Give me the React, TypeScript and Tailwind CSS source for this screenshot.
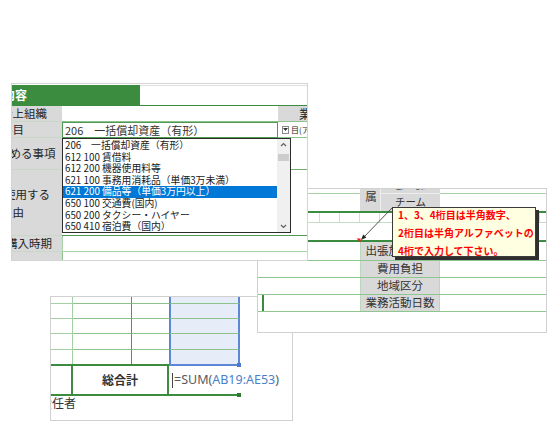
const ITEMS = [
  '206　一括償却資産（有形）',
  '612 100 賃借料',
  '612 200 機器使用料等',
  '621 100 事務用消耗品（単価3万未満）',
  '621 200 備品等（単価3万円以上）',
  '650 100 交通費(国内)',
  '650 200 タクシー・ハイヤー',
  '650 410 宿泊費（国内）',
];

function Chevron({ up }: { up?: boolean }) {
  return (
    <svg width="7" height="5" viewBox="0 0 7 5">
      <path d={up ? 'M1 4 L3.5 1.5 L6 4' : 'M1 1 L3.5 3.5 L6 1'} fill="none" stroke="#606060" strokeWidth="1.2" />
    </svg>
  );
}

function PanelA() {
  return (
    <div className="absolute left-[11px] top-[83px] w-[297px] h-[178px] bg-white border border-[#d4d4d4] overflow-hidden flex flex-col text-[#262626]">
      <div className="h-px shrink-0" />
      <div className="h-[20px] shrink-0 flex">
        <div className="w-[128px] bg-[#3c8c40] overflow-hidden flex items-center">
          <span className="ml-[-9px] text-[12px] font-bold text-white whitespace-nowrap leading-none">内容</span>
        </div>
        <div className="flex-1 border-t border-[#dedede]" />
      </div>
      <div className="h-px shrink-0 bg-[#3c8c40]" />

      <div className="h-[16px] shrink-0 flex">
        <div className="w-[50px] shrink-0 bg-[#d9d9d9] overflow-hidden flex items-center border-b border-[#c8d8c8]">
          <span className="ml-[-11px] text-[11.5px] leading-none whitespace-nowrap">計上組織</span>
        </div>
        <div className="w-[216px] shrink-0 border-b border-[#8cc28c]" />
        <div className="flex-1 bg-[#d9d9d9] overflow-hidden flex items-center border-b border-[#8cc28c]">
          <span className="ml-[21px] text-[12px] leading-none whitespace-nowrap">業務</span>
        </div>
      </div>

      <div className="h-[16px] shrink-0 flex">
        <div className="w-[50px] shrink-0 bg-[#d9d9d9] overflow-hidden flex items-center border-b border-[#c8d8c8]">
          <span className="ml-[-11px] text-[11.5px] leading-none whitespace-nowrap">科目</span>
        </div>
        <div className="w-[216px] shrink-0 border border-[#4e9a52] flex items-center pl-[2px] text-[11px] leading-none whitespace-nowrap text-[#333]">
          206　一括償却資産（有形）
        </div>
        <div className="flex-1 flex items-center pl-[4px] gap-[2px] overflow-hidden border-b border-[#8cc28c]">
          <div className="w-[7px] h-[8px] shrink-0 border border-[#8a8a8a] bg-white flex items-center justify-center">
            <svg width="5" height="3" viewBox="0 0 5 3">
              <path d="M0 0 H5 L2.5 3 Z" fill="#333" />
            </svg>
          </div>
          <span className="text-[8px] leading-none whitespace-nowrap">目(ア</span>
        </div>
      </div>

      <div className="h-[32px] shrink-0 flex">
        <div className="w-[50px] shrink-0 bg-[#d9d9d9] overflow-hidden flex items-center border-b border-[#c8d8c8]">
          <span className="ml-[-14px] text-[11.5px] leading-none whitespace-nowrap">求める事項</span>
        </div>
        <div className="flex-1 border-b border-[#6fae6f]" />
      </div>

      <div className="h-[66px] shrink-0 flex">
        <div className="w-[50px] shrink-0 bg-[#d9d9d9] overflow-hidden flex flex-col justify-center border-b border-[#c8d8c8] text-[11.5px] leading-[18px] whitespace-nowrap">
          <span className="ml-[-8px]">使用する</span>
          <span className="ml-[-11px]">理由</span>
        </div>
        <div className="flex-1 border-b border-[#4e9a52]" />
      </div>

      <div className="h-[16px] shrink-0 flex">
        <div className="w-[50px] shrink-0 bg-[#d9d9d9] overflow-hidden flex items-center border-b border-[#c8d8c8]">
          <span className="ml-[-6px] text-[11.5px] leading-none whitespace-nowrap">購入時期</span>
        </div>
        <div className="flex-1 border-l border-b border-[#a6d2a6]" />
      </div>

      <div className="flex-1 flex">
        <div className="w-[50px] shrink-0 bg-[#d9d9d9]" />
        <div className="flex-1 border-l border-[#8cc28c]" />
      </div>

      <div className="absolute left-[50px] top-[54px] w-[229px] h-[95px] bg-white border border-[#2b2b2b] flex">
        <div className="flex-1 flex flex-col pt-px overflow-hidden">
          {ITEMS.map((t, i) => (
            <div
              key={t}
              className={
                i === 4
                  ? 'h-[11.6px] shrink-0 bg-[#0078d7] text-white pl-[2px] text-[9.8px] leading-[11.6px] whitespace-nowrap'
                  : 'h-[11.6px] shrink-0 text-[#1a1a1a] pl-[2px] text-[9.8px] leading-[11.6px] whitespace-nowrap'
              }
            >
              {t}
            </div>
          ))}
        </div>
        <div className="w-[13px] shrink-0 bg-[#f0f0f0] flex flex-col items-center">
          <div className="h-[9px] mt-[1px] flex items-center">
            <Chevron up />
          </div>
          <div className="w-[11px] h-[7px] mt-[5px] bg-[#cdcdcd]" />
          <div className="flex-1" />
          <div className="h-[9px] mb-[1px] flex items-center">
            <Chevron />
          </div>
        </div>
      </div>
    </div>
  );
}

const LABELS: [string, string][] = [
  ['出張旅費区分', 'h-[19px]'],
  ['費用負担', 'h-[17px]'],
  ['地域区分', 'h-[17px]'],
  ['業務活動日数', 'h-[17px]'],
];

function PanelB() {
  return (
    <div className="absolute left-[257px] top-[188px] w-[290px] h-[145px] bg-white border border-[#d0d0d0] overflow-hidden flex flex-col text-[#333]">
      <div className="h-[22px] shrink-0 flex">
        <div className="w-[102px] shrink-0">
          <div className="h-[5px] border-b border-[#a6d2a6]" />
        </div>
        <div className="w-[80px] shrink-0 flex bg-[#d9d9d9]">
          <div className="w-[21px] border-r border-[#eeeeee] flex justify-center pl-[2px] text-[11.5px] leading-[14px]">属</div>
          <div className="flex-1 flex flex-col">
            <div className="h-[5px] overflow-hidden flex justify-center border-b border-[#eeeeee]">
              <span className="text-[10px] leading-[10px] mt-[-9px] whitespace-nowrap text-[#555]">部・課</span>
            </div>
            <div className="flex-1 flex items-center justify-center text-[10.5px] leading-none">チーム</div>
          </div>
        </div>
        <div className="flex-1">
          <div className="h-[5px] border-b border-[#a6d2a6]" />
        </div>
      </div>
      <div className="h-[2px] shrink-0 bg-[#3c8c40]" />

      <div className="h-[10px] shrink-0 flex border-b border-[#c5dcc5]">
        <div className="w-[2px] shrink-0" />
        {Array.from({ length: 15 }).map((_, i) => (
          <div key={i} className="w-[20px] shrink-0 border-r border-[#dadada]" />
        ))}
      </div>
      <div className="h-[17px] shrink-0" />
      <div className="h-[2px] shrink-0 bg-[#3c8c40]" />

      {LABELS.map(([t, h], i) => (
        <div key={t} className={`${h} shrink-0 flex border-b border-[#8fc58f]`}>
          <div className="w-[102px] shrink-0 pl-[4px]">
            {i === 3 && <div className="h-full border-l-2 border-[#3c8c40]" />}
          </div>
          <div className="w-[80px] shrink-0 bg-[#d9d9d9] border-x border-[#b9d8b9] flex items-center justify-center text-[11.5px] leading-none whitespace-nowrap overflow-hidden">
            {t}
          </div>
          <div className="flex-1" />
        </div>
      ))}
      <div className="flex-1" />
    </div>
  );
}

function Callout() {
  return (
    <>
      <svg className="absolute left-[350px] top-[200px]" width="50" height="50" viewBox="0 0 50 50">
        <line x1="42" y1="8" x2="13" y2="38" stroke="#404040" strokeWidth="0.9" />
        <path d="M11 40 L13.2 34.6 L16.4 37.6 Z" fill="#222" />
        <path d="M6.5 38.5 L10.5 38.5 L10.5 42.5 Z" fill="#ff1a1a" />
      </svg>
      <div className="absolute left-[392px] top-[207px] w-[144px] h-[50px] bg-[#ffffe1] border border-[#3a3a3a] shadow-[3px_3px_0_#2f2f2f] pl-[5px] overflow-hidden">
        <div className="mt-[-2px] text-[10px] leading-[18px] font-bold text-[#ff0000] whitespace-nowrap">
          <div>1、3、4桁目は半角数字、</div>
          <div>2桁目は半角アルファベットの</div>
          <div>4桁で入力して下さい。</div>
        </div>
      </div>
    </>
  );
}

const CROWS = ['h-[7px]', 'h-[15px]', 'h-[15px]', 'h-[16px]', 'h-[14px]'];

function PanelC() {
  return (
    <div className="absolute left-[50px] top-[296px] w-[243px] h-[125px] bg-white border border-[#d0d0d0] overflow-hidden flex flex-col text-[#333]">
      <div className="w-[189px] flex flex-col">
        {CROWS.map((h, i) => (
          <div key={i} className={`${h} shrink-0 flex`}>
            <div className={i < 4 ? 'w-[22px] border-r border-b border-[#a3d1a3]' : 'w-[22px] border-r border-[#a3d1a3]'} />
            <div className={i < 4 ? 'w-[59px] border-r border-[#4e9a52] border-b border-b-[#8cc28c]' : 'w-[59px] border-r border-[#4e9a52]'} />
            <div className={i < 4 ? 'w-[37px] border-b border-[#8cc28c]' : 'w-[37px]'} />
            <div className={i < 4 ? 'w-[71px] bg-[#e6edf8] border-x-2 border-x-[#5b87d6] border-b border-b-[#8cc28c]' : 'w-[71px] bg-[#e6edf8] border-x-2 border-x-[#5b87d6]'} />
          </div>
        ))}
      </div>
      <div className="h-[2px] shrink-0 flex">
        <div className="w-[118px] bg-[#3c8c40]" />
        <div className="w-[71px] bg-[#5b87d6]" />
        <div className="w-[4px] h-[4px] mt-[-1px] ml-[-3px] bg-[#4a78cc]" />
      </div>
      <div className="h-[28px] shrink-0 flex">
        <div className="w-[22px] shrink-0 border-r-2 border-[#3c8c40]" />
        <div className="w-[96px] shrink-0 border-r-2 border-[#3c8c40] flex items-center justify-center text-[12px] font-bold leading-none">
          総合計
        </div>
        <div className="flex-1 flex items-center pl-[3px] whitespace-nowrap font-['Noto_Sans',sans-serif] text-[12.5px] leading-none text-[#5a5a5a]">
          <span className="w-px h-[15px] bg-[#444] mr-[1px]" />
          <span>=SUM(</span>
          <span className="text-[#4a7fc9]">AB19:AE53</span>
          <span>)</span>
        </div>
      </div>
      <div className="h-[2px] shrink-0 flex">
        <div className="w-[189px] bg-[#3c8c40]" />
        <div className="w-[4px] h-[4px] mt-[-1px] ml-[-3px] bg-[#2f7a33]" />
      </div>
      <div className="h-[13px] shrink-0 flex items-center overflow-hidden">
        <span className="ml-[-11px] text-[12px] leading-none whitespace-nowrap">責任者</span>
      </div>
    </div>
  );
}

export default function App() {
  return (
    <div className="relative w-[555px] h-[432px] bg-white overflow-hidden font-['Noto_Sans_CJK_JP','Noto_Sans',sans-serif]">
      <PanelC />
      <PanelB />
      <Callout />
      <PanelA />
    </div>
  );
}
